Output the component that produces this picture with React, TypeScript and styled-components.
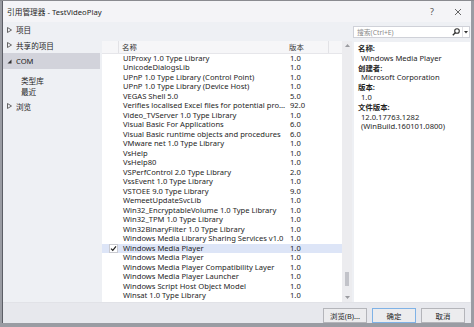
import React from "react";
import styled, { createGlobalStyle } from "styled-components";

const GlobalStyle = createGlobalStyle`
  html, body { margin: 0; padding: 0; }
  body {
    width: 474px; height: 327px; overflow: hidden;
    background: #7d7f86;
    font-family: "Noto Sans", "Noto Sans CJK SC", sans-serif;
    color: #1e1e1e;
  }
`;

const FONT = `"Noto Sans", "Noto Sans CJK SC", sans-serif`;

const Screen = styled.div`
  width: 474px;
  height: 327px;
  display: flex;
  flex-direction: column;
  padding: 1px 3px 4px 3px;
  box-sizing: border-box;
  background: linear-gradient(#8a8b90, #8a8b90) top/100% 1px no-repeat, #9a9ca3;
`;

const Window = styled.div`
  flex: 1;
  display: flex;
  flex-direction: column;
  background: #eef0f4;
  box-shadow: -1px 0 0 #5c5e66;
  font-family: ${FONT};
  font-size: 7.6px;
  min-height: 0;
`;

const TitleBar = styled.div`
  height: 21px;
  display: flex;
  align-items: center;
  padding: 0 0 0 4px;
  background: #f4f4f7;
`;

const Title = styled.div`
  flex: 1;
  font-size: 7.7px;
  color: #1e1e1e;
`;

const TitleButton = styled.div`
  width: 26px;
  text-align: center;
  font-size: 9px;
  color: #555;
  display: flex;
  justify-content: center;
`;

const Body = styled.div`
  flex: 1;
  display: grid;
  grid-template-columns: 97px 250px 116px;
  column-gap: 2px;
  grid-template-rows: 19px 1fr;
  min-height: 0;
`;

const Nav = styled.div`
  grid-row: 1 / span 2;
  display: flex;
  flex-direction: column;
`;

const NavItem = styled.div<{ $selected?: boolean; $h?: number }>`
  height: ${(p) => p.$h ?? 16}px;
  display: flex;
  align-items: center;
  gap: 4px;
  padding-left: 4px;
  background: ${(p) => (p.$selected ? "#d2d3db" : "transparent")};
  font-size: 7.6px;
`;

const NavChild = styled.div<{ $top?: number }>`
  height: 11px;
  display: flex;
  align-items: center;
  padding-left: 18px;
  margin-top: ${(p) => p.$top ?? 0}px;
`;

const ListCell = styled.div`
  grid-column: 2;
  grid-row: 2;
  display: flex;
  background: #ffffff;
  min-height: 0;
`;

const Table = styled.div`
  flex: 1;
  display: flex;
  flex-direction: column;
`;

const HeaderRow = styled.div`
  height: 12.5px;
  display: grid;
  grid-template-columns: 17px 167px 43px 1fr;
  background: #f6f6f8;
  border-bottom: 1px solid #e6e6ea;
  box-sizing: border-box;
`;

const HeaderCell = styled.div<{ $line?: boolean }>`
  display: flex;
  align-items: center;
  padding-left: 3px;
  border-right: ${(p) => (p.$line ? "1px solid #e2e2e6" : "none")};
  font-size: 7.4px;
  color: #333;
`;

const Row = styled.div<{ $selected?: boolean }>`
  height: 9.5px;
  display: grid;
  grid-template-columns: 17px 167px 43px 1fr;
  background: ${(p) => (p.$selected ? "#dde5f7" : "transparent")};
`;

const Cell = styled.div`
  display: flex;
  align-items: center;
  padding-left: 4px;
  white-space: nowrap;
  overflow: hidden;
  line-height: 9.5px;
`;

const CheckCell = styled.div`
  display: flex;
  align-items: center;
  justify-content: flex-end;
  padding-right: 1px;
`;

const ScrollBar = styled.div`
  width: 10px;
  background: #ececef;
  display: flex;
  flex-direction: column;
  align-items: center;
  padding: 3px 0;
  box-sizing: border-box;
`;

const ScrollTrack = styled.div`
  flex: 1;
  width: 100%;
  display: flex;
  flex-direction: column;
  justify-content: flex-end;
  align-items: center;
  padding-bottom: 10px;
`;

const Thumb = styled.div`
  width: 4px;
  height: 14px;
  background: #c2c3c9;
`;

const SearchCell = styled.div`
  grid-column: 3;
  grid-row: 1;
  display: flex;
  align-items: flex-start;
  padding-top: 4px;
`;

const SearchBox = styled.div`
  flex: 1;
  height: 12px;
  margin-left: -1px;
  display: flex;
  align-items: center;
  background: #fff;
  border: 1px solid #cfd1d8;
  box-sizing: border-box;
`;

const SearchText = styled.div`
  flex: 1;
  padding-left: 3px;
  color: #8a8a8a;
  font-size: 6.8px;
`;

const SearchIcon = styled.div`
  width: 12px;
  display: flex;
  justify-content: center;
`;

const DropPart = styled.div`
  width: 6px;
  height: 100%;
  display: flex;
  align-items: center;
  justify-content: center;
  border-left: 1px solid #e2e2e6;
`;

const Details = styled.div`
  grid-column: 3;
  grid-row: 2;
  background: #fff;
  padding: 2px 4px;
  display: flex;
  flex-direction: column;
  margin-top: 1px;
`;

const Label = styled.div`
  font-weight: 700;
  height: 9.8px;
  line-height: 9.8px;
  font-size: 7.4px;
`;

const Value = styled.div`
  padding-left: 3px;
  height: 9.8px;
  line-height: 9.8px;
  font-size: 7.6px;
`;

const BottomBar = styled.div`
  height: 21px;
  display: flex;
  justify-content: flex-end;
  align-items: flex-end;
  gap: 5px;
  padding-right: 6px;
  background: #e7e8ed;
  border-top: 1px solid #e1e2e7;
  box-sizing: border-box;
`;

const Button = styled.div<{ $primary?: boolean }>`
  width: 44px;
  height: 15px;
  box-sizing: border-box;
  display: flex;
  align-items: center;
  justify-content: center;
  background: #ececee;
  border: 1px solid ${(p) => (p.$primary ? "#7fb2e6" : "#b4b5ba")};
  font-size: 7.4px;
  color: #1e1e1e;
`;

const Collapsed = () => (
  <svg width="5" height="6" viewBox="0 0 5 6">
    <path d="M0.5 0.5 L4.5 3 L0.5 5.5 Z" fill="none" stroke="#555" strokeWidth="0.9" />
  </svg>
);

const Expanded = () => (
  <svg width="5" height="5" viewBox="0 0 5 5">
    <path d="M4.5 0.5 L4.5 4.5 L0.5 4.5 Z" fill="#333" />
  </svg>
);

const CheckMark = () => (
  <svg width="9" height="9" viewBox="0 0 9 9">
    <rect x="0.5" y="0.5" width="8" height="8" fill="#fff" stroke="#c9cad0" />
    <path d="M2 4.6 L3.8 6.4 L7 2.4" fill="none" stroke="#1e1e1e" strokeWidth="1.2" />
  </svg>
);

const UpArrow = () => (
  <svg width="5" height="3" viewBox="0 0 5 3">
    <path d="M0 3 L2.5 0 L5 3 Z" fill="#9a9ba0" />
  </svg>
);

const DownArrow = () => (
  <svg width="5" height="3" viewBox="0 0 5 3">
    <path d="M0 0 L2.5 3 L5 0 Z" fill="#9a9ba0" />
  </svg>
);

const Magnifier = () => (
  <svg width="8" height="8" viewBox="0 0 8 8">
    <circle cx="5" cy="3" r="2.3" fill="none" stroke="#333" strokeWidth="1.1" />
    <path d="M3.3 4.7 L0.8 7.2" stroke="#333" strokeWidth="1.3" />
  </svg>
);

const SmallDown = () => (
  <svg width="4" height="3" viewBox="0 0 4 3">
    <path d="M0 0 L2 2.5 L4 0 Z" fill="#333" />
  </svg>
);

const CloseIcon = () => (
  <svg width="8" height="8" viewBox="0 0 8 8">
    <path d="M1 1 L7 7 M7 1 L1 7" stroke="#555" strokeWidth="0.9" />
  </svg>
);

type Item = { name: string; version: string; checked?: boolean; selected?: boolean };

const items: Item[] = [
  { name: "UIProxy 1.0 Type Library", version: "1.0" },
  { name: "UnicodeDialogsLib", version: "1.0" },
  { name: "UPnP 1.0 Type Library (Control Point)", version: "1.0" },
  { name: "UPnP 1.0 Type Library (Device Host)", version: "1.0" },
  { name: "VEGAS Shell 5.0", version: "5.0" },
  { name: "Verifies localised Excel files for potential pro...", version: "92.0" },
  { name: "Video_TVServer 1.0 Type Library", version: "1.0" },
  { name: "Visual Basic For Applications", version: "6.0" },
  { name: "Visual Basic runtime objects and procedures", version: "6.0" },
  { name: "VMware net 1.0 Type Library", version: "1.0" },
  { name: "VsHelp", version: "1.0" },
  { name: "VsHelp80", version: "1.0" },
  { name: "VSPerfControl 2.0 Type Library", version: "2.0" },
  { name: "VssEvent 1.0 Type Library", version: "1.0" },
  { name: "VSTOEE 9.0 Type Library", version: "9.0" },
  { name: "WemeetUpdateSvcLib", version: "1.0" },
  { name: "Win32_EncryptableVolume 1.0 Type Library", version: "1.0" },
  { name: "Win32_TPM 1.0 Type Library", version: "1.0" },
  { name: "Win32BinaryFilter 1.0 Type Library", version: "1.0" },
  { name: "Windows Media Library Sharing Services v1.0", version: "1.0" },
  { name: "Windows Media Player", version: "1.0", checked: true, selected: true },
  { name: "Windows Media Player", version: "1.0" },
  { name: "Windows Media Player Compatibility Layer", version: "1.0" },
  { name: "Windows Media Player Launcher", version: "1.0" },
  { name: "Windows Script Host Object Model", version: "1.0" },
  { name: "Winsat 1.0 Type Library", version: "1.0" },
];

export default function App() {
  return (
    <>
      <GlobalStyle />
      <Screen>
        <Window>
          <TitleBar>
            <Title>引用管理器 - TestVideoPlay</Title>
            <TitleButton>?</TitleButton>
            <TitleButton>
              <CloseIcon />
            </TitleButton>
          </TitleBar>
          <Body>
            <Nav>
              <NavItem $h={15}>
                <Collapsed />
                项目
              </NavItem>
              <NavItem $h={16}>
                <Collapsed />
                共享的项目
              </NavItem>
              <NavItem $selected $h={16}>
                <Expanded />
                COM
              </NavItem>
              <NavChild $top={6}>类型库</NavChild>
              <NavChild>最近</NavChild>
              <NavItem $h={18}>
                <Collapsed />
                浏览
              </NavItem>
            </Nav>
            <SearchCell>
              <SearchBox>
                <SearchText>搜索(Ctrl+E)</SearchText>
                <SearchIcon>
                  <Magnifier />
                </SearchIcon>
                <DropPart>
                  <SmallDown />
                </DropPart>
              </SearchBox>
            </SearchCell>
            <ListCell>
              <Table>
                <HeaderRow>
                  <HeaderCell $line />
                  <HeaderCell>名称</HeaderCell>
                  <HeaderCell $line>版本</HeaderCell>
                  <HeaderCell />
                </HeaderRow>
                {items.map((it, i) => (
                  <Row key={i} $selected={it.selected}>
                    <CheckCell>{it.checked ? <CheckMark /> : null}</CheckCell>
                    <Cell>{it.name}</Cell>
                    <Cell>{it.version}</Cell>
                    <Cell />
                  </Row>
                ))}
              </Table>
              <ScrollBar>
                <UpArrow />
                <ScrollTrack>
                  <Thumb />
                </ScrollTrack>
                <DownArrow />
              </ScrollBar>
            </ListCell>
            <Details>
              <Label>名称:</Label>
              <Value>Windows Media Player</Value>
              <Label>创建者:</Label>
              <Value>Microsoft Corporation</Value>
              <Label>版本:</Label>
              <Value>1.0</Value>
              <Label>文件版本:</Label>
              <Value>12.0.17763.1282</Value>
              <Value>(WinBuild.160101.0800)</Value>
            </Details>
          </Body>
          <BottomBar>
            <Button>浏览(B)...</Button>
            <Button $primary>确定</Button>
            <Button>取消</Button>
          </BottomBar>
        </Window>
      </Screen>
    </>
  );
}
